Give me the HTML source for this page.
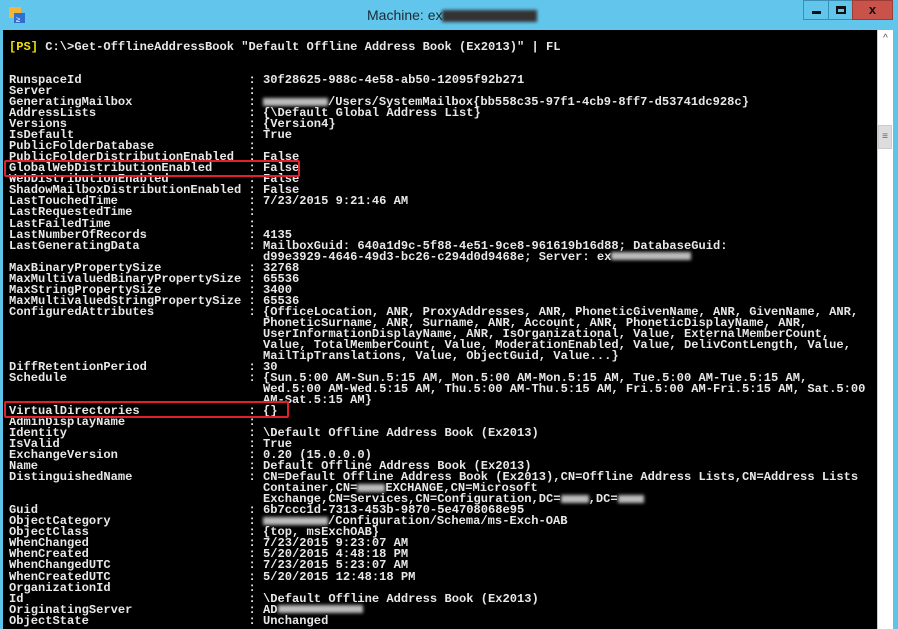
<!DOCTYPE html>
<html><head><meta charset="utf-8"><style>
*{margin:0;padding:0}
body{width:898px;height:629px;overflow:hidden;background:#5ec3e9;position:relative;font-family:"Liberation Sans",sans-serif}
#title{position:absolute;left:0;top:0;width:898px;height:30px;background:#62c6ec}
#title .t{position:absolute;left:367px;top:7px;font-size:14px;color:#1a2a35}
.blur{display:inline-block;background:#bbb;filter:blur(1.5px);vertical-align:middle}
#con{position:absolute;left:3px;top:30px;width:874px;height:599px;background:#000}
pre{position:absolute;left:6px;top:12px;font-family:"Liberation Mono",monospace;font-size:12.1px;line-height:11.03px;color:#e8e8e8;font-weight:bold}
.y{color:#f0e000}
#sb{position:absolute;left:877px;top:30px;width:15px;height:599px;background:#fff;border-left:1px solid #ccc}
#thumb{position:absolute;left:878px;top:125px;width:14px;height:24px;background:#ddd;border:1px solid #ccc;box-sizing:border-box;font-size:10px;text-align:center;color:#666;line-height:22px}
.btn{position:absolute;top:0;height:20px;border:1px solid #3a8fb5;box-sizing:border-box}
.box{position:absolute;border:2px solid #e0202a;border-radius:2px}
</style></head><body>
<div id="title">
<svg style="position:absolute;left:8px;top:6px" width="18" height="18"><rect x="1" y="1" width="12" height="11" fill="#f3b63a"/><rect x="6" y="7" width="11" height="10" fill="#2e6fcf"/><text x="8" y="16" font-size="8" fill="#fff" font-family="Liberation Sans">≥</text></svg>
<div class="t">Machine: ex<span class="blur" style="width:95px;height:12px;background:#333"></span></div>
<div class="btn" style="left:803px;width:26px;background:#62c6ec"><div style="position:absolute;left:8px;top:10px;width:9px;height:3px;background:#111"></div></div>
<div class="btn" style="left:828px;width:25px;background:#62c6ec"><div style="position:absolute;left:7px;top:5px;width:10px;height:8px;border:2px solid #111;border-top-width:3px;box-sizing:border-box"></div></div>
<div class="btn" style="left:852px;width:41px;background:#c9524a;border-color:#9c3c36;color:#111;font-size:13px;font-weight:bold;text-align:center;line-height:18px">x</div>
</div>
<div id="con">
<pre><span class="y">[PS]</span> C:\&gt;Get-OfflineAddressBook "Default Offline Address Book (Ex2013)" | FL


RunspaceId                       : 30f28625-988c-4e58-ab50-12095f92b271
Server                           :
GeneratingMailbox                : <span class="blur" style="width:65px;height:8px"></span>/Users/SystemMailbox{bb558c35-97f1-4cb9-8ff7-d53741dc928c}
AddressLists                     : {\Default Global Address List}
Versions                         : {Version4}
IsDefault                        : True
PublicFolderDatabase             :
PublicFolderDistributionEnabled  : False
GlobalWebDistributionEnabled     : False
WebDistributionEnabled           : False
ShadowMailboxDistributionEnabled : False
LastTouchedTime                  : 7/23/2015 9:21:46 AM
LastRequestedTime                :
LastFailedTime                   :
LastNumberOfRecords              : 4135
LastGeneratingData               : MailboxGuid: 640a1d9c-5f88-4e51-9ce8-961619b16d88; DatabaseGuid:
                                   d99e3929-4646-49d3-bc26-c294d0d9468e; Server: ex<span class="blur" style="width:80px;height:8px"></span>
MaxBinaryPropertySize            : 32768
MaxMultivaluedBinaryPropertySize : 65536
MaxStringPropertySize            : 3400
MaxMultivaluedStringPropertySize : 65536
ConfiguredAttributes             : {OfficeLocation, ANR, ProxyAddresses, ANR, PhoneticGivenName, ANR, GivenName, ANR,
                                   PhoneticSurname, ANR, Surname, ANR, Account, ANR, PhoneticDisplayName, ANR,
                                   UserInformationDisplayName, ANR, IsOrganizational, Value, ExternalMemberCount,
                                   Value, TotalMemberCount, Value, ModerationEnabled, Value, DelivContLength, Value,
                                   MailTipTranslations, Value, ObjectGuid, Value...}
DiffRetentionPeriod              : 30
Schedule                         : {Sun.5:00 AM-Sun.5:15 AM, Mon.5:00 AM-Mon.5:15 AM, Tue.5:00 AM-Tue.5:15 AM,
                                   Wed.5:00 AM-Wed.5:15 AM, Thu.5:00 AM-Thu.5:15 AM, Fri.5:00 AM-Fri.5:15 AM, Sat.5:00
                                   AM-Sat.5:15 AM}
VirtualDirectories               : {}
AdminDisplayName                 :
Identity                         : \Default Offline Address Book (Ex2013)
IsValid                          : True
ExchangeVersion                  : 0.20 (15.0.0.0)
Name                             : Default Offline Address Book (Ex2013)
DistinguishedName                : CN=Default Offline Address Book (Ex2013),CN=Offline Address Lists,CN=Address Lists
                                   Container,CN=<span class="blur" style="width:28px;height:8px"></span>EXCHANGE,CN=Microsoft
                                   Exchange,CN=Services,CN=Configuration,DC=<span class="blur" style="width:28px;height:8px"></span>,DC=<span class="blur" style="width:26px;height:8px"></span>
Guid                             : 6b7ccc1d-7313-453b-9870-5e4708068e95
ObjectCategory                   : <span class="blur" style="width:65px;height:8px"></span>/Configuration/Schema/ms-Exch-OAB
ObjectClass                      : {top, msExchOAB}
WhenChanged                      : 7/23/2015 9:23:07 AM
WhenCreated                      : 5/20/2015 4:48:18 PM
WhenChangedUTC                   : 7/23/2015 5:23:07 AM
WhenCreatedUTC                   : 5/20/2015 12:48:18 PM
OrganizationId                   :
Id                               : \Default Offline Address Book (Ex2013)
OriginatingServer                : AD<span class="blur" style="width:85px;height:8px"></span>
ObjectState                      : Unchanged</pre>
</div>
<div class="box" style="left:4px;top:160px;width:292px;height:13px"></div>
<div class="box" style="left:4px;top:401px;width:281px;height:13px"></div>
<div id="sb"><div style="text-align:center;font-size:10px;color:#555;margin-top:3px">^</div></div>
<div id="thumb">≡</div>
</body></html>
